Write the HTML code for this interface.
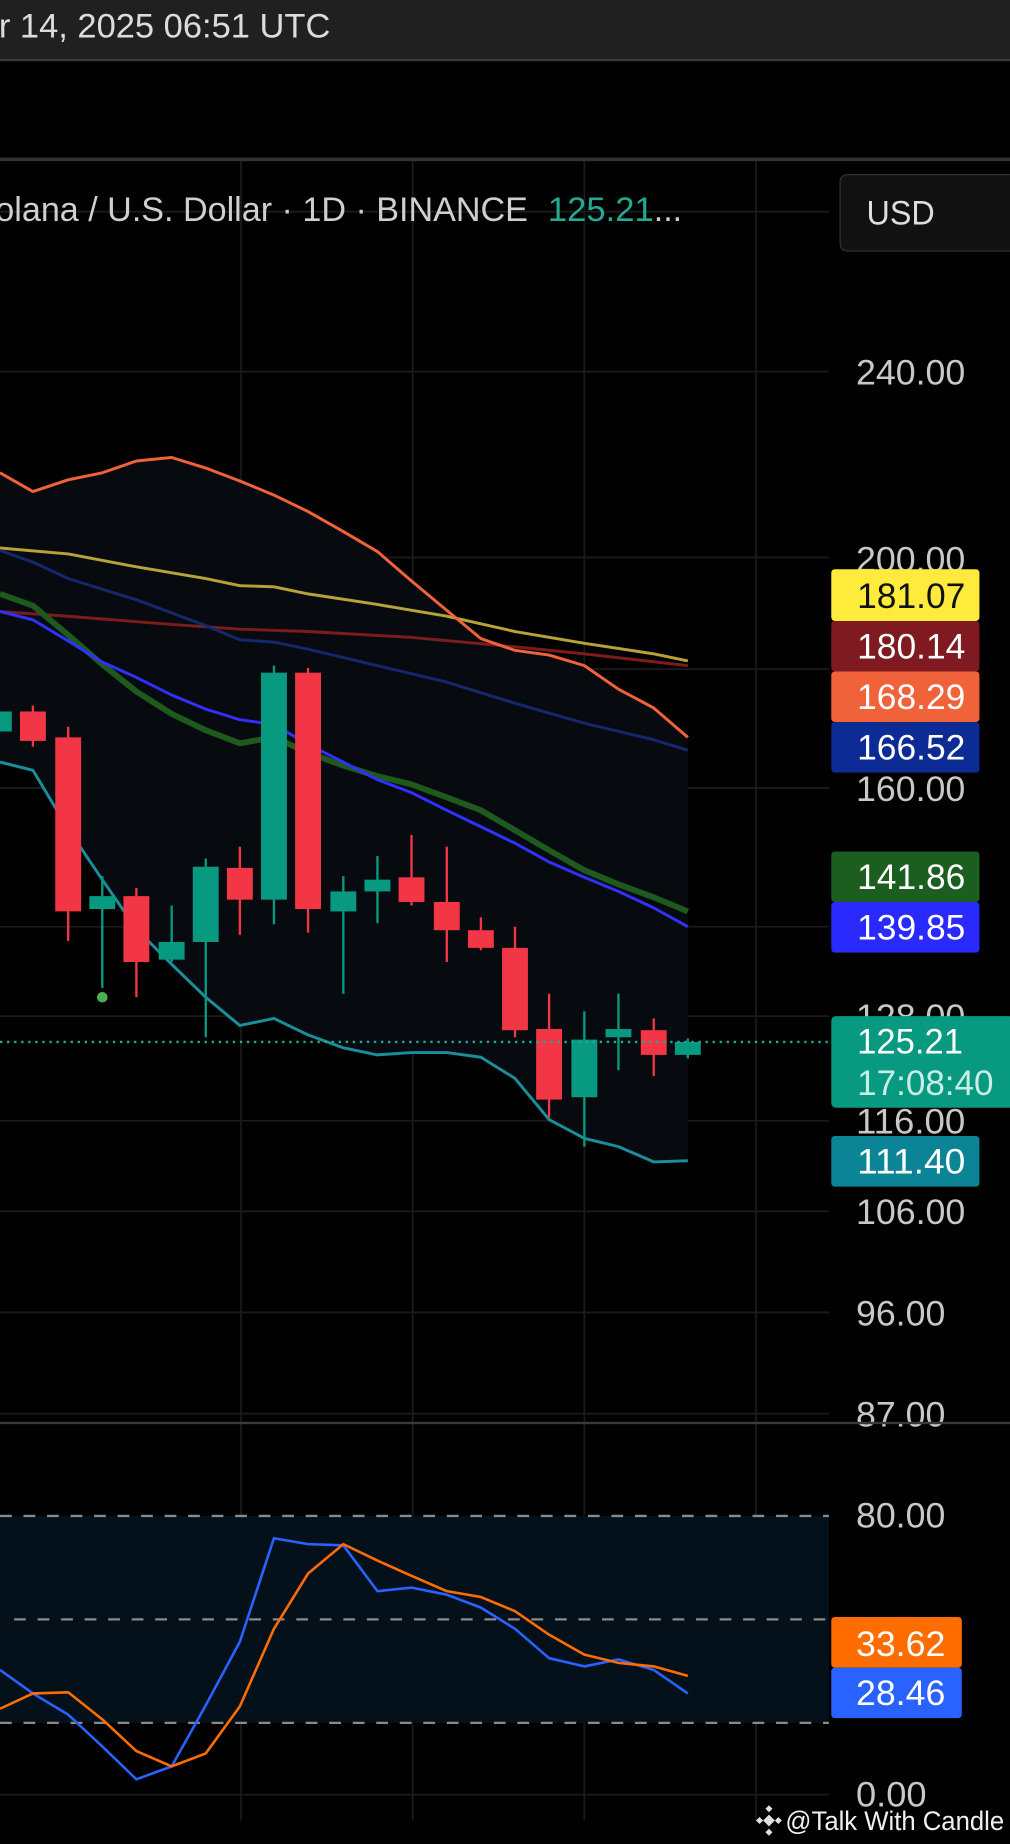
<!DOCTYPE html>
<html><head><meta charset="utf-8"><style>
html,body{margin:0;padding:0;background:#000;width:1010px;height:1844px;overflow:hidden}
svg{display:block}
text{font-family:"Liberation Sans",sans-serif}
</style></head><body>
<svg width="1010" height="1844" viewBox="0 0 859 1568" preserveAspectRatio="none" xmlns="http://www.w3.org/2000/svg">
<rect x="0" y="0" width="859" height="1568" fill="#000"/>
<rect x="0" y="0" width="859" height="50" fill="#202020"/>
<rect x="0" y="50" width="859" height="2" fill="#3a3a3a"/>
<text x="-1" y="32" font-size="29" fill="#dcdcdc" textLength="282" lengthAdjust="spacingAndGlyphs">r 14, 2025 06:51 UTC</text>
<rect x="0" y="134" width="859" height="3" fill="#333"/>
<g stroke="#1b1b1b" stroke-width="1.5">
<line x1="205" y1="137" x2="205" y2="1548"/><line x1="351" y1="137" x2="351" y2="1548"/>
<line x1="497" y1="137" x2="497" y2="1548"/><line x1="643" y1="137" x2="643" y2="1548"/>
<line x1="0" y1="316" x2="705" y2="316"/><line x1="0" y1="474" x2="705" y2="474"/>
<line x1="0" y1="569" x2="705" y2="569"/><line x1="0" y1="670" x2="705" y2="670"/>
<line x1="0" y1="788" x2="705" y2="788"/><line x1="0" y1="864" x2="705" y2="864"/>
<line x1="0" y1="953" x2="705" y2="953"/><line x1="0" y1="1030" x2="705" y2="1030"/>
<line x1="0" y1="1116" x2="705" y2="1116"/><line x1="0" y1="1202" x2="705" y2="1202"/>
<line x1="0" y1="1408" x2="705" y2="1408"/><line x1="0" y1="1526" x2="705" y2="1526"/>
<line x1="0" y1="180" x2="705" y2="180"/>
</g>
<polygon fill="#070b10" points="0,402 28,418 58,408 87,402 116,392 146,389 175,398 204,409 233,421 262,435 292,452 321,469 350,494 380,519 409,543 438,553 467,557 497,566 526,586 556,602 585,627 585,987 556,988 526,975 497,968 467,952 438,917 409,899 380,895 350,895 321,897 292,891 262,880 233,866 204,872 175,848 146,820 116,790 87,748 58,705 28,655 0,648"/>
<text x="-4" y="188" font-size="29" fill="#cfcfcf" textLength="453" lengthAdjust="spacingAndGlyphs">olana / U.S. Dollar · 1D · BINANCE</text>
<text x="466" y="188" font-size="29" fill="#22ab94" textLength="90" lengthAdjust="spacingAndGlyphs">125.21</text>
<text x="556" y="188" font-size="29" fill="#cfcfcf">...</text>
<rect x="714.5" y="148.5" width="150" height="65" rx="6" fill="#111" stroke="#333"/>
<text x="737" y="191" font-size="29" fill="#ddd" textLength="58" lengthAdjust="spacingAndGlyphs">USD</text>
<g fill="none" stroke-linejoin="round">
<polyline stroke="#b8a338" stroke-width="2.5" points="0,466 58,471 116,482 175,492 204,498 233,499 262,505 321,514 380,524 438,537 497,547 556,556 585,562"/>
<polyline stroke="#7e1c1c" stroke-width="2.5" points="0,520 58,524 146,531 204,535 262,537 350,542 438,550 497,556 585,566"/>
<polyline stroke="#14286e" stroke-width="2.5" points="0,468 28,478 58,492 116,510 175,532 204,544 233,546 262,552 321,566 380,580 438,598 497,615 556,629 585,638"/>
<polyline stroke="#f0623a" stroke-width="2.5" points="0,402 28,418 58,408 87,402 116,392 146,389 175,398 204,409 233,421 262,435 292,452 321,469 350,494 380,519 409,543 438,553 467,557 497,566 526,586 556,602 585,627"/>
<polyline stroke="#1e5a1e" stroke-width="5" points="0,505 28,515 58,540 87,565 116,588 146,607 175,621 204,632 233,627 262,640 292,651 321,660 350,667 380,678 409,689 438,706 467,723 497,740 526,752 556,763 585,775"/>
<polyline stroke="#3030ff" stroke-width="2.5" points="0,520 28,527 58,545 87,563 116,576 146,591 175,603 204,612 233,616 262,633 292,648 321,663 350,674 380,689 409,703 438,717 467,733 497,746 526,758 556,772 585,788"/>
<polyline stroke="#1b8e9c" stroke-width="2.5" points="0,648 28,655 58,705 87,748 116,790 146,820 175,848 204,872 233,866 262,880 292,891 321,897 350,895 380,895 409,899 438,917 467,952 497,968 526,975 556,988 585,987"/>
</g>
<g stroke-width="2">
<rect x="-2" y="605" width="12" height="17" fill="#089981"/>
<line x1="28" y1="600" x2="28" y2="635" stroke="#f23645"/><rect x="17" y="605" width="22" height="25" fill="#f23645"/>
<line x1="58" y1="618" x2="58" y2="800" stroke="#f23645"/><rect x="47" y="627" width="22" height="148" fill="#f23645"/>
<line x1="87" y1="745" x2="87" y2="840" stroke="#089981"/><rect x="76" y="762" width="22" height="11" fill="#089981"/>
<circle cx="87" cy="848" r="4.5" fill="#4caf50"/>
<line x1="116" y1="755" x2="116" y2="848" stroke="#f23645"/><rect x="105" y="762" width="22" height="56" fill="#f23645"/>
<line x1="146" y1="770" x2="146" y2="818" stroke="#089981"/><rect x="135" y="801" width="22" height="15" fill="#089981"/>
<line x1="175" y1="730" x2="175" y2="882" stroke="#089981"/><rect x="164" y="737" width="22" height="64" fill="#089981"/>
<line x1="204" y1="720" x2="204" y2="795" stroke="#f23645"/><rect x="193" y="738" width="22" height="27" fill="#f23645"/>
<line x1="233" y1="566" x2="233" y2="786" stroke="#089981"/><rect x="222" y="572" width="22" height="193" fill="#089981"/>
<line x1="262" y1="568" x2="262" y2="793" stroke="#f23645"/><rect x="251" y="572" width="22" height="201" fill="#f23645"/>
<line x1="292" y1="745" x2="292" y2="845" stroke="#089981"/><rect x="281" y="758" width="22" height="17" fill="#089981"/>
<line x1="321" y1="728" x2="321" y2="785" stroke="#089981"/><rect x="310" y="748" width="22" height="10" fill="#089981"/>
<line x1="350" y1="710" x2="350" y2="770" stroke="#f23645"/><rect x="339" y="746" width="22" height="21" fill="#f23645"/>
<line x1="380" y1="720" x2="380" y2="818" stroke="#f23645"/><rect x="369" y="767" width="22" height="24" fill="#f23645"/>
<line x1="409" y1="780" x2="409" y2="808" stroke="#f23645"/><rect x="398" y="791" width="22" height="15" fill="#f23645"/>
<line x1="438" y1="788" x2="438" y2="882" stroke="#f23645"/><rect x="427" y="806" width="22" height="70" fill="#f23645"/>
<line x1="467" y1="845" x2="467" y2="950" stroke="#f23645"/><rect x="456" y="875" width="22" height="60" fill="#f23645"/>
<line x1="497" y1="860" x2="497" y2="975" stroke="#089981"/><rect x="486" y="884" width="22" height="49" fill="#089981"/>
<line x1="526" y1="845" x2="526" y2="910" stroke="#089981"/><rect x="515" y="875" width="22" height="7" fill="#089981"/>
<line x1="556" y1="866" x2="556" y2="915" stroke="#f23645"/><rect x="545" y="876" width="22" height="21" fill="#f23645"/>
<line x1="585" y1="883" x2="585" y2="900" stroke="#089981"/><rect x="574" y="886" width="22" height="11" fill="#089981"/>
</g>
<line x1="0" y1="886" x2="705" y2="886" stroke="#22ab94" stroke-width="2" stroke-dasharray="2,4"/>
<g font-size="30" fill="#c8c8c8">
<text x="728" y="327" textLength="93" lengthAdjust="spacingAndGlyphs">240.00</text>
<text x="728" y="486" textLength="93" lengthAdjust="spacingAndGlyphs">200.00</text>
<text x="728" y="681" textLength="93" lengthAdjust="spacingAndGlyphs">160.00</text>
<text x="728" y="875" textLength="93" lengthAdjust="spacingAndGlyphs">128.00</text>
<text x="728" y="964" textLength="93" lengthAdjust="spacingAndGlyphs">116.00</text>
<text x="728" y="1041" textLength="93" lengthAdjust="spacingAndGlyphs">106.00</text>
<text x="728" y="1127" textLength="76" lengthAdjust="spacingAndGlyphs">96.00</text>
<text x="728" y="1213" textLength="76" lengthAdjust="spacingAndGlyphs">87.00</text>
</g>
<g font-size="30">
<rect x="707" y="484" width="126" height="44" rx="3" fill="#ffeb3b"/><text x="729" y="517" fill="#111" textLength="92" lengthAdjust="spacingAndGlyphs">181.07</text>
<rect x="707" y="528" width="126" height="43" rx="3" fill="#7f1a20"/><text x="729" y="560" fill="#fff" textLength="92" lengthAdjust="spacingAndGlyphs">180.14</text>
<rect x="707" y="571" width="126" height="43" rx="3" fill="#f0623a"/><text x="729" y="603" fill="#fff" textLength="92" lengthAdjust="spacingAndGlyphs">168.29</text>
<rect x="707" y="614" width="126" height="43" rx="3" fill="#0d2b95"/><text x="729" y="646" fill="#fff" textLength="92" lengthAdjust="spacingAndGlyphs">166.52</text>
<rect x="707" y="724" width="126" height="43" rx="3" fill="#1b5e20"/><text x="729" y="756" fill="#fff" textLength="92" lengthAdjust="spacingAndGlyphs">141.86</text>
<rect x="707" y="767" width="126" height="43" rx="3" fill="#2a2aff"/><text x="729" y="799" fill="#fff" textLength="92" lengthAdjust="spacingAndGlyphs">139.85</text>
<rect x="707" y="864" width="155" height="78" rx="4" fill="#089981"/><text x="729" y="896" fill="#fff" textLength="90" lengthAdjust="spacingAndGlyphs">125.21</text><text x="729" y="931" fill="#c8eee6" textLength="116" lengthAdjust="spacingAndGlyphs">17:08:40</text>
<rect x="707" y="966" width="126" height="43" rx="3" fill="#0b8596"/><text x="729" y="998" fill="#fff" textLength="92" lengthAdjust="spacingAndGlyphs">111.40</text>
</g>
<rect x="0" y="1209" width="859" height="2" fill="#3a3a3a"/>
<rect x="0" y="1289" width="705" height="176" fill="#04101a"/>
<g stroke="#8a8a8a" stroke-width="2" stroke-dasharray="10,10">
<line x1="0" y1="1289" x2="705" y2="1289"/><line x1="12" y1="1377" x2="705" y2="1377"/><line x1="0" y1="1465" x2="705" y2="1465"/>
</g>
<g fill="none" stroke-width="2.2" stroke-linejoin="round">
<polyline stroke="#2962ff" points="0,1420 28,1440 58,1458 87,1485 116,1513 146,1502 175,1450 204,1396 233,1308 262,1313 292,1314 321,1353 350,1350 380,1356 409,1367 438,1385 467,1410 497,1417 526,1411 556,1420 585,1440"/>
<polyline stroke="#ff6d00" points="0,1453 28,1440 58,1439 87,1462 116,1489 146,1502 175,1491 204,1451 233,1385 262,1338 292,1313 321,1327 350,1340 380,1353 409,1358 438,1370 467,1390 497,1407 526,1414 556,1417 585,1425"/>
</g>
<g font-size="30">
<text x="728" y="1299" fill="#c8c8c8" textLength="76" lengthAdjust="spacingAndGlyphs">80.00</text>
<text x="728" y="1536" fill="#c8c8c8" textLength="60" lengthAdjust="spacingAndGlyphs">0.00</text>
<rect x="707" y="1375" width="111" height="43" rx="3" fill="#ff6d00"/><text x="728" y="1408" fill="#fff" textLength="76" lengthAdjust="spacingAndGlyphs">33.62</text>
<rect x="707" y="1418" width="111" height="43" rx="3" fill="#2962ff"/><text x="728" y="1450" fill="#fff" textLength="76" lengthAdjust="spacingAndGlyphs">28.46</text>
</g>
<g fill="#e0e0e0">
<path d="M654,1543 l5,5 -5,5 -5,-5z"/>
<path d="M654,1535 l3,3 -3,3 -3,-3z"/><path d="M654,1555 l3,3 -3,3 -3,-3z"/>
<path d="M646,1545 l3,3 -3,3 -3,-3z"/><path d="M662,1545 l3,3 -3,3 -3,-3z"/>
</g>
<text x="668" y="1556" font-size="23" fill="#f0f0f0" textLength="186" lengthAdjust="spacingAndGlyphs">@Talk With Candle</text>
</svg>
</body></html>
